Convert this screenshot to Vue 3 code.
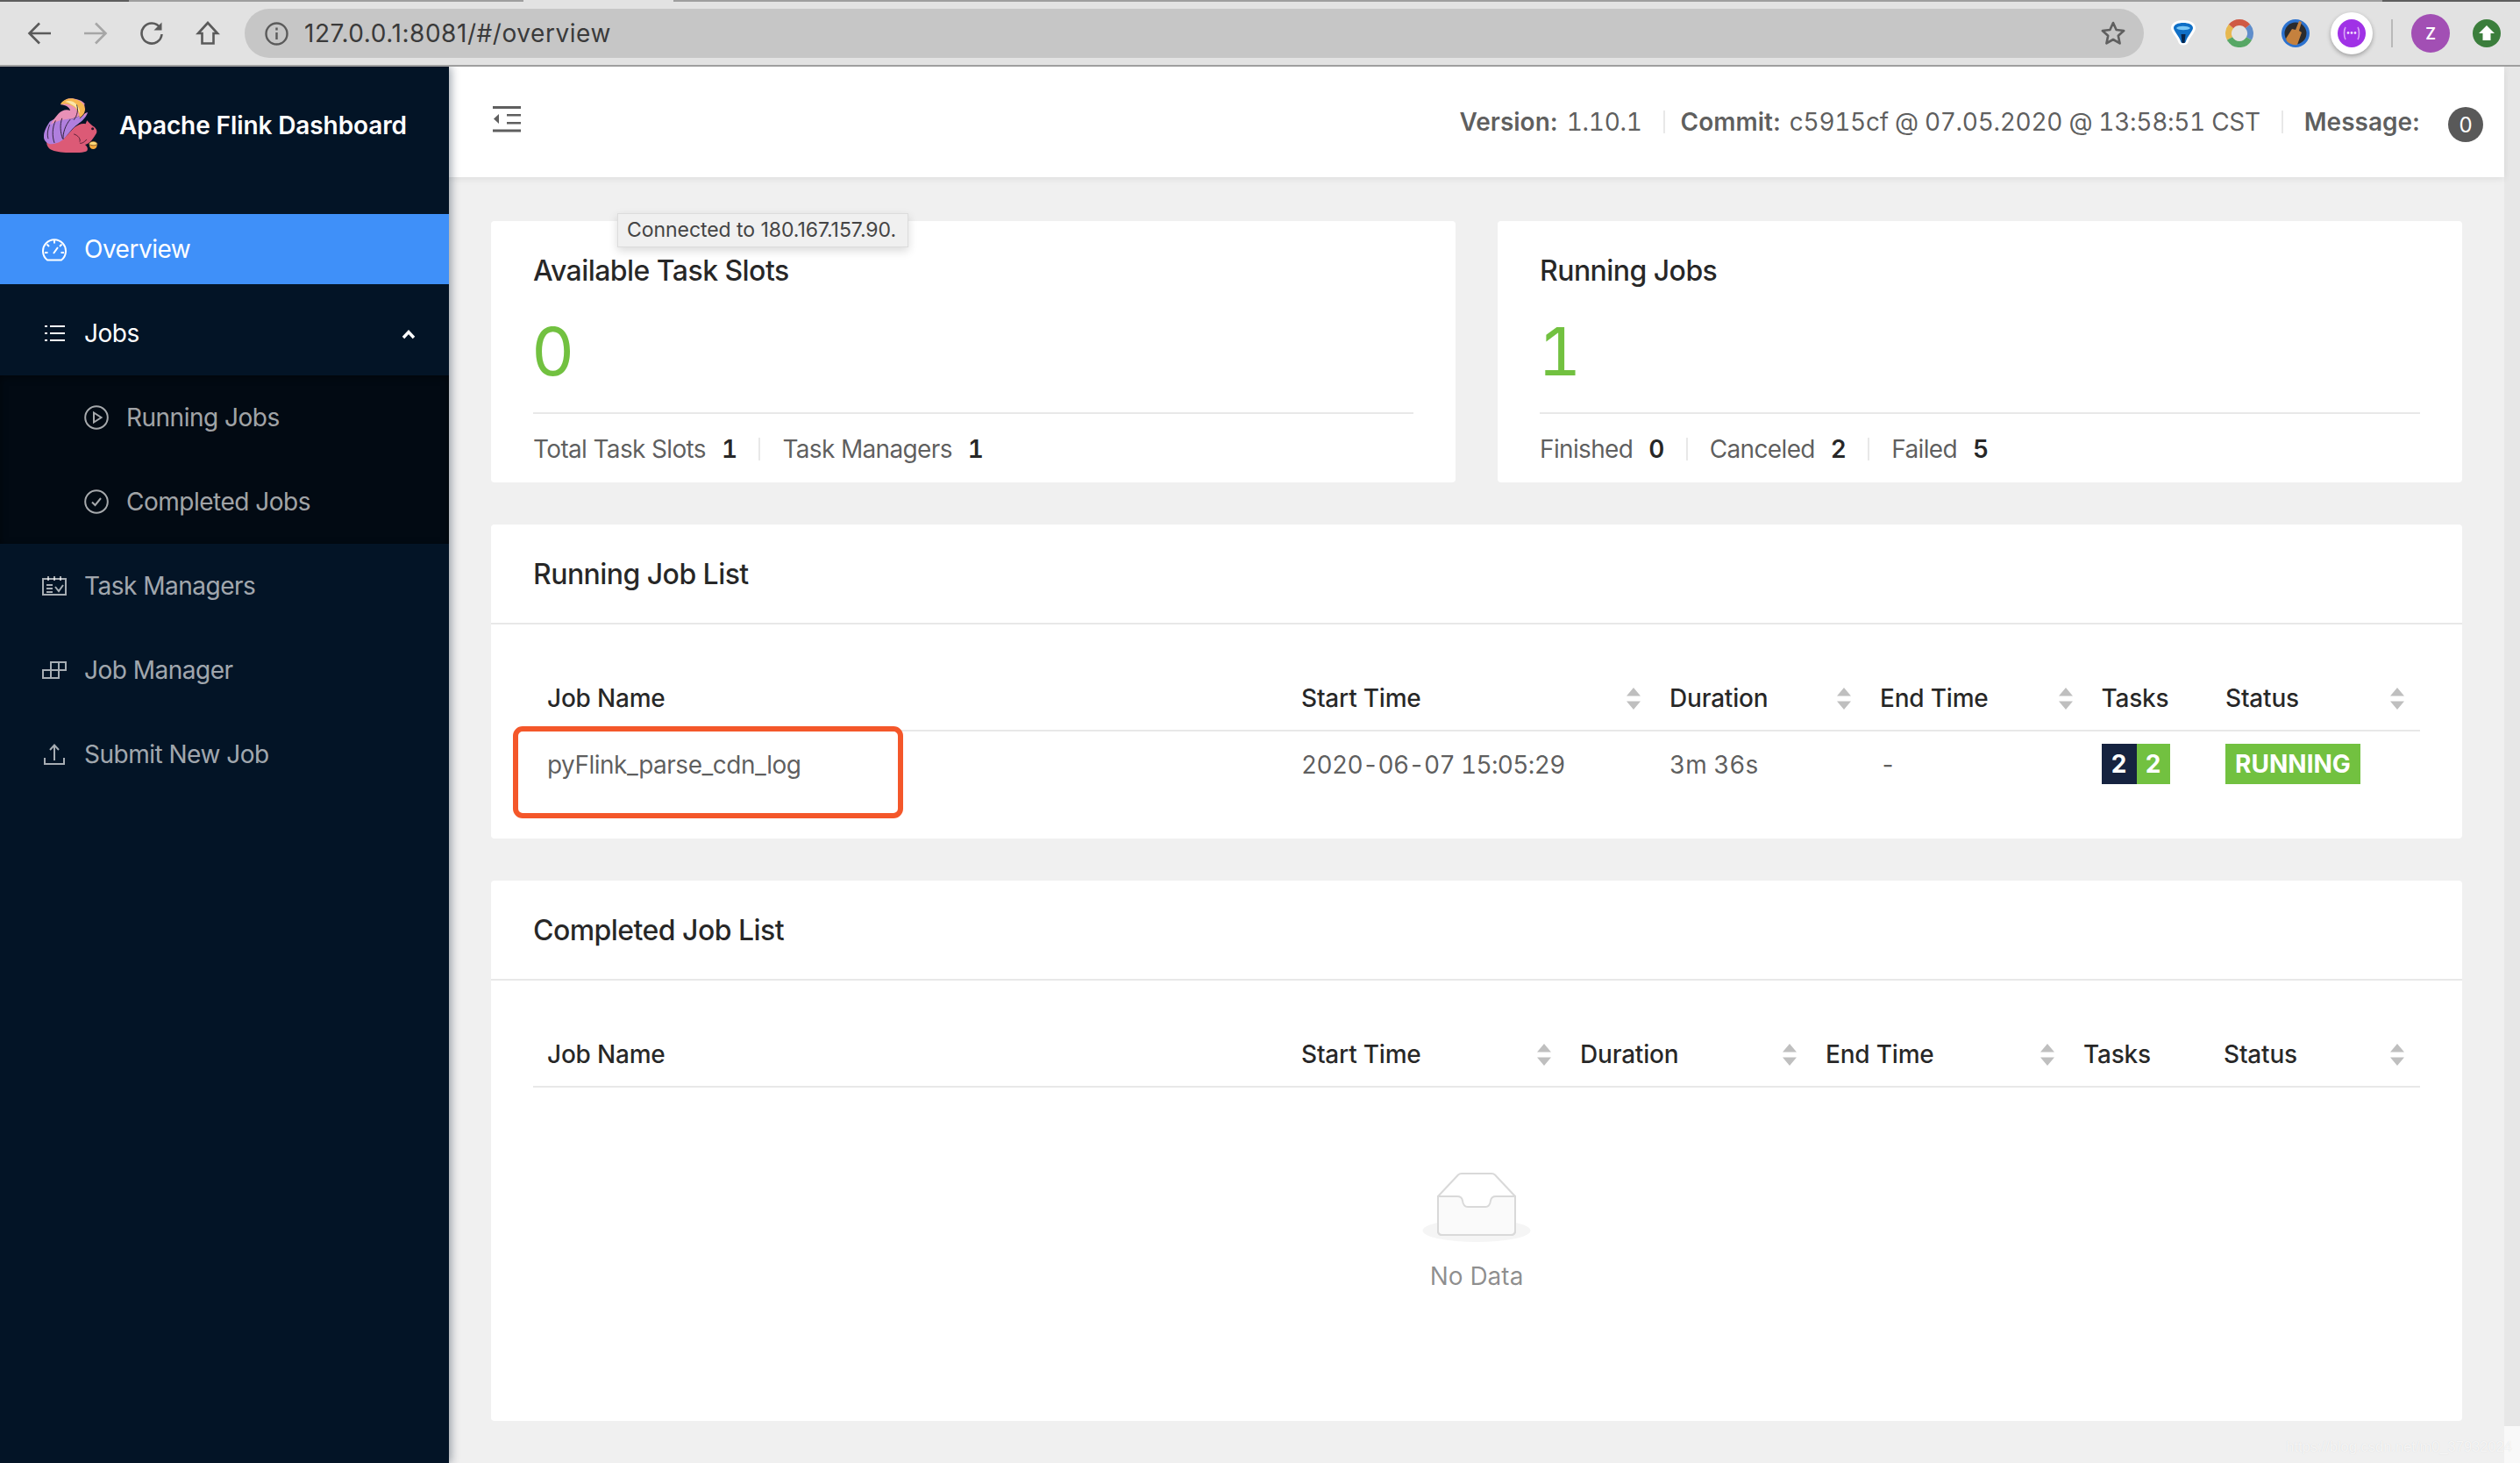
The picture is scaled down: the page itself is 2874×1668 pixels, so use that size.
<script setup>
const menuBottom = ['Task Managers', 'Job Manager', 'Submit New Job']
const runCols = [
  { t: 'Job Name', s: false },
  { t: 'Start Time', s: true },
  { t: 'Duration', s: true },
  { t: 'End Time', s: true },
  { t: 'Tasks', s: false },
  { t: 'Status', s: true }
]
</script>

<template>
  <div class="page">
    <header class="chrome">
      <div class="tabline">
        <span class="tl dark a"></span><span class="tl gray b"></span><span class="tl none c"></span><span class="tl gray d"></span><span class="tl dark e"></span>
      </div>
      <div class="toolbar">
        <svg class="nav" viewBox="0 0 28 28" fill="none" stroke="#5a5a5a" stroke-width="2.6"><path d="M27 14H3M14 2.5 2.5 14 14 25.5"/></svg>
        <svg class="nav" viewBox="0 0 28 28" fill="none" stroke="#a6a6a6" stroke-width="2.6"><path d="M1 14h24M14 2.5 25.5 14 14 25.5"/></svg>
        <svg class="nav" viewBox="0 0 28 28" fill="none" stroke="#5a5a5a" stroke-width="2.6"><path d="M23.5 7.5A11.5 11.5 0 1 0 25.5 15"/><path d="M25.5 1.5v9h-9" fill="#5a5a5a" stroke="none"/></svg>
        <svg class="nav" viewBox="0 0 28 28" fill="none" stroke="#5a5a5a" stroke-width="2.6"><path d="M14 2 3 14h4.500v11.500h13V14H25Z"/></svg>
        <div class="omni">
          <svg class="info" viewBox="0 0 27 27" fill="none" stroke="#5a5a5a" stroke-width="2.4"><circle cx="13.5" cy="13.5" r="12"/><path d="M13.500 12v8M13.500 6.500v3"/></svg>
          <span class="url">127.0.0.1:8081/#/overview</span>
          <svg class="star" viewBox="0 0 30 30" fill="none" stroke="#5f5f5f" stroke-width="2.6" stroke-linejoin="round"><path d="m15 3 3.600 8 8.600 1-6.400 5.800 1.800 8.600L15 22l-7.600 4.400 1.800-8.600L2.800 12l8.600-1Z"/></svg>
        </div>
        <svg class="ext e1" viewBox="0 0 30 32"><path d="M1 10C1 4 8 1 15 1s14 3 14 9c0 4-6 10-8 15-1 6-11 6-12 0C7 20 1 14 1 10Z" fill="#fff"/><path d="M4 10c0-4 5-6 11-6s11 2 11 6c0 3-6 9-8 15-.5 3-5.500 3-6 0C10 19 4 13 4 10Z" fill="#0f6fc6"/><path d="M7 10c2-3 13-3 16 0-2 3-14 3-16 0Z" fill="#7cc8f5"/><path d="M12.500 17h5l-1 10h-3Z" fill="#06244a"/></svg>
        <svg class="ext e2" viewBox="0 0 32 32" fill="none" stroke-width="7"><path d="M5 22A12.500 12.500 0 0 1 6.500 8" stroke="#e7b84f"/><path d="M6.500 8A12.500 12.500 0 0 1 25.500 8" stroke="#cf5a45"/><path d="M25.500 8A12.500 12.500 0 0 1 27 22" stroke="#5f8dcb"/><path d="M27 22A12.500 12.500 0 0 1 5 22" stroke="#57a765"/></svg>
        <svg class="ext e3" viewBox="0 0 32 32"><circle cx="16" cy="16" r="16" fill="#2c72cf"/><circle cx="16" cy="16" r="12.500" fill="#2b2b2d"/><path d="m20 2 3 1-3 10 3 2-5 14c-4 1-9-1-12-4l-1-3 7-11 4 1Z" fill="#c5813e"/></svg>
        <div class="ext-pill">
          <svg class="e4" viewBox="0 0 32 32"><circle cx="16" cy="16" r="16" fill="#a032e6"/><path d="M9 9c-2 3-2 11 0 14M23 9c2 3 2 11 0 14" fill="none" stroke="#d9a6f5" stroke-width="1.600"/><circle cx="12" cy="15.500" r="1.400" fill="#f1dcfc"/><circle cx="16" cy="15.500" r="1.400" fill="#f1dcfc"/><circle cx="20" cy="15.500" r="1.400" fill="#f1dcfc"/></svg>
        </div>
        <span class="tool-sep"></span>
        <span class="avatar">Z</span>
        <svg class="ext e5" viewBox="0 0 32 32"><circle cx="16" cy="16" r="16" fill="#3b7e3c"/><path d="M16 7 25 16H20.500V24H11.500V16H7Z" fill="#fff"/></svg>
      </div>
    </header>

    <div class="main">
      <aside class="sider">
        <div class="brand">
          <svg class="logo" viewBox="150 100 185 185">
            <path d="M170 272C190 288 282 290 297 279 302 270 296 262 290 258 310 252 318 236 327 222 333 214 330 205 322 198 314 192 306 186 297 175L292 187C278 184 266 190 256 198 244 208 232 226 214 240 200 246 185 246 165 236 155 250 160 262 170 272Z" fill="#dc5a76"/>
            <path d="M170 180C160 195 148 215 150 235 152 246 162 256 176 256 196 254 206 248 216 240 232 224 244 206 258 194 275 182 292 170 300 148 282 158 262 164 247 170 230 170 200 160 170 180Z" fill="#b07fde"/>
            <path d="M200 152C190 165 180 175 172 190 190 178 220 170 246 170 262 164 282 158 298 148L286 165 290 120C280 105 250 98 230 102 215 108 210 118 207 122 225 124 236 130 240 142 225 136 210 142 200 152Z" fill="#e891b7"/>
            <path d="M207 121C212 108 232 98 252 102 272 106 288 118 290 135 292 150 284 160 272 168 272 150 262 132 245 125 232 118 220 118 207 121Z" fill="#f6b74f"/>
            <path d="M222 112C236 106 252 110 262 122 270 132 273 142 273 152 266 135 250 120 222 112Z" fill="#fbe6a8"/>
            <path d="M170 190C164 205 160 222 165 238M190 176C178 200 178 230 186 252M212 168C204 190 206 215 214 238M240 172C222 192 214 222 216 240M288 120C296 140 292 152 272 168M262 122C268 140 264 158 252 174" fill="none" stroke="#1a1220" stroke-width="2.500"/>
            <path d="M252 222C266 226 276 238 272 248M296 240C288 250 276 256 272 252" fill="none" stroke="#41162a" stroke-width="2.500"/>
            <circle cx="316" cy="204" r="4.500" fill="#25172a"/>
            <circle cx="318" cy="260" r="13" fill="#f5a93b"/>
            <path d="M303 256C308 244 328 244 333 256 324 262 312 262 303 256Z" fill="#ffd977" stroke="#5c3418" stroke-width="2"/>
          </svg>
          <span class="brand-name">Apache Flink Dashboard</span>
        </div>

        <nav class="menu">
          <div class="item active">
            <svg class="ic" viewBox="0 0 28 28" fill="none" stroke="currentColor" stroke-width="2"><path d="M6 26.500A13 13 0 1 1 22 26.500Z"/><path d="M14 4v3.500M5.500 8.500 8 11M22.500 8.500 20 11M3 18h3.500M25 18h-3.500M13 19l5-7" /></svg>
            <span>Overview</span>
          </div>
          <div class="item open">
            <svg class="ic" viewBox="0 0 28 28" fill="none" stroke="currentColor" stroke-width="2"><path d="M9 6h17M9 14h17M9 22h17M3 6h3M3 14h3M3 22h3"/></svg>
            <span>Jobs</span>
            <svg class="chev" viewBox="0 0 16 12" fill="none" stroke="currentColor" stroke-width="3.400"><path d="M2 10 8 3.500 14 10"/></svg>
          </div>
          <div class="sub">
            <div class="item subitem">
              <svg class="ic" viewBox="0 0 28 28" fill="none" stroke="currentColor" stroke-width="2"><circle cx="14" cy="14" r="12.800"/><path d="M11 8.500 19.500 14 11 19.500Z"/></svg>
              <span>Running Jobs</span>
            </div>
            <div class="item subitem">
              <svg class="ic" viewBox="0 0 28 28" fill="none" stroke="currentColor" stroke-width="2"><circle cx="14" cy="14" r="12.800"/><path d="m9 14.500 3.500 3.500 6.500-8"/></svg>
              <span>Completed Jobs</span>
            </div>
          </div>
          <div class="item">
            <svg class="ic" viewBox="0 0 28 28" fill="none" stroke="currentColor" stroke-width="2"><path d="M1 6h26v18H1Z"/><path d="M7 3v5M14 3v5M21 3v5M5 13h7M5 17h7M5 21h7M15 15l4 5 5-7"/></svg>
            <span>{{ menuBottom[0] }}</span>
          </div>
          <div class="item">
            <svg class="ic" viewBox="0 0 28 28" fill="none" stroke="currentColor" stroke-width="2"><path d="M10 14V5h17v9H1v9h18v-9M19 5v9M10 14v9"/></svg>
            <span>{{ menuBottom[1] }}</span>
          </div>
          <div class="item">
            <svg class="ic" viewBox="0 0 28 28" fill="none" stroke="currentColor" stroke-width="2"><path d="M3 18v7h22v-7M14 5v16M9 9l5-5.500L19 9"/></svg>
            <span>{{ menuBottom[2] }}</span>
          </div>
        </nav>
      </aside>

      <section class="workspace">
        <div class="topbar">
          <svg class="fold" viewBox="0 0 32 30" fill="#5f5f5f"><path d="M0 0h32v3H0ZM16 9h16v2.500H16ZM16 18h16v2.500H16ZM0 26.500h32V29.500H0ZM1 14.500 7 9V20Z"/></svg>
          <div class="meta">
            <b>Version:</b><span class="v1">1.10.1</span>
            <i class="vsep s1"></i>
            <b>Commit:</b><span class="v2">c5915cf @ 07.05.2020 @ 13:58:51 CST</span>
            <i class="vsep s2"></i>
            <b>Message:</b>
            <span class="count">0</span>
          </div>
        </div>

        <div class="content">
          <div class="stats">
            <div class="card stat">
              <h3 class="stat-title">Available Task Slots</h3>
              <div class="big">0</div>
              <div class="stat-foot">
                <span>Total Task Slots</span><b>1</b><i class="fsep"></i><span>Task Managers</span><b>1</b>
              </div>
            </div>
            <div class="card stat">
              <h3 class="stat-title">Running Jobs</h3>
              <div class="big">1</div>
              <div class="stat-foot">
                <span>Finished</span><b>0</b><i class="fsep"></i><span>Canceled</span><b>2</b><i class="fsep"></i><span>Failed</span><b>5</b>
              </div>
            </div>
          </div>

          <div class="card list">
            <h3 class="list-title">Running Job List</h3>
            <div class="list-body">
              <div class="row head run-cols">
                <div v-for="c in runCols" :key="c.t" class="th">
                  <span>{{ c.t }}</span>
                  <svg v-if="c.s" class="sort" viewBox="0 0 16 25" fill="#bfbfbf"><path d="M8 0 16 9.500H0ZM0 15.500H16L8 25Z"/></svg>
                </div>
              </div>
              <div class="row body run-cols">
                <div class="td txt name">
                  pyFlink_parse_cdn_log
                  <span class="mark"></span>
                </div>
                <div class="td txt stamp">2020-06-07 15:05:29</div>
                <div class="td txt">3m 36s</div>
                <div class="td txt">-</div>
                <div class="td"><span class="tasks"><b class="t1">2</b><b class="t2">2</b></span></div>
                <div class="td"><span class="state">RUNNING</span></div>
              </div>
            </div>
          </div>

          <div class="card list done">
            <h3 class="list-title">Completed Job List</h3>
            <div class="list-body">
              <div class="row head done-cols">
                <div v-for="c in runCols" :key="c.t" class="th">
                  <span>{{ c.t }}</span>
                  <svg v-if="c.s" class="sort" viewBox="0 0 16 25" fill="#bfbfbf"><path d="M8 0 16 9.500H0ZM0 15.500H16L8 25Z"/></svg>
                </div>
              </div>
              <div class="empty">
                <svg class="empty-ic" viewBox="0 0 124 80" fill="none">
                  <ellipse cx="62" cy="66" rx="61.500" ry="13" fill="#f5f5f5"/>
                  <path d="M18 27 41 2.500C42 1.500 43 1 45 1H79C81 1 82 1.500 83 2.500L106 27V66C106 69 104 71 101 71H23C20 71 18 69 18 66Z" fill="#fff" stroke="#d9d9d9" stroke-width="2"/>
                  <path d="M18 27H40C44 27 45.500 29 46 32 46.500 36 48 39 52 39H72C76 39 77.500 36 78 32 78.500 29 80 27 84 27H106V66C106 69 104 71 101 71H23C20 71 18 69 18 66Z" fill="#fafafa" stroke="#d9d9d9" stroke-width="2"/>
                </svg>
                <p>No Data</p>
              </div>
            </div>
          </div>
          <span class="tooltip">Connected to 180.167.157.90.</span>
          <span class="watermark">https://blog.csdn.net/m0_37932024</span>
        </div>
      </section>

      <div class="scrollbar"><span class="track"></span><span class="rest"></span></div>
    </div>
  </div>
</template>

<style scoped>
.page {
  width: 2874px;
  height: 1668px;
  overflow: hidden;
  display: flex;
  flex-direction: column;
  font-family: Inter, "Liberation Sans", sans-serif;
  font-size: 28px;
  color: rgba(0, 0, 0, 0.65);
  background: #f0f0f0;
}
/* browser chrome */
.chrome {
  height: 76px;
  flex: none;
  background: #e2e2e2;
  border-bottom: 2px solid #9e9e9e;
  box-sizing: border-box;
  position: relative;
  z-index: 5;
}
.tabline { display: flex; height: 2px; }
.tl.dark { background: #5e5e5e; }
.tl.gray { background: #9e9e9e; }
.tl.a { width: 147px; }
.tl.b { width: 450px; }
.tl.c { width: 171px; }
.tl.d { width: 1949px; }
.tl.e { flex: 1; }
.toolbar {
  height: 72px;
  display: flex;
  align-items: center;
  padding-left: 31px;
}
.nav { width: 28px; height: 28px; margin-right: 36px; flex: none; margin-top: -1px; }
.nav:nth-child(4) { margin-right: 28px; }
.omni {
  width: 2166px;
  height: 56px;
  border-radius: 28px;
  background: #c6c6c6;
  display: flex;
  align-items: center;
  padding: 0 20px 0 23px;
  box-sizing: border-box;
  flex: none;
}
.info { width: 27px; height: 27px; flex: none; }
.url {
  margin-left: 18px;
  flex: 1;
  color: #3a3a3a;
  font-size: 28px;
  letter-spacing: 0.55px;
}
.star { width: 30px; height: 30px; flex: none; }
.ext { flex: none; }
.e1 { width: 30px; height: 32px; margin-left: 30px; }
.e2 { width: 32px; height: 32px; margin-left: 33px; }
.e3 { width: 32px; height: 32px; margin-left: 32px; }
.ext-pill {
  width: 48px;
  height: 48px;
  margin-left: 24px;
  border-radius: 50%;
  background: #fff;
  box-shadow: 0 2px 5px rgba(0, 0, 0, 0.3);
  display: flex;
  align-items: center;
  justify-content: center;
  flex: none;
}
.e4 { width: 32px; height: 32px; }
.tool-sep { width: 2px; height: 32px; margin-left: 21px; background: #b9b9b9; flex: none; }
.avatar {
  width: 44px;
  height: 44px;
  margin-left: 21px;
  border-radius: 50%;
  background: #a24fb4;
  color: #fff;
  font-size: 18px;
  font-weight: 600;
  display: flex;
  align-items: center;
  justify-content: center;
  flex: none;
}
.e5 { width: 32px; height: 32px; margin-left: 26px; }

.main { flex: 1; display: flex; min-height: 0; }

/* sidebar */
.sider {
  width: 512px;
  flex: none;
  background: #031426;
  box-shadow: 2px 0 10px rgba(0, 21, 41, 0.4);
  position: relative;
  z-index: 3;
  color: rgba(255, 255, 255, 0.65);
}
.brand {
  height: 168px;
  display: flex;
  align-items: center;
  padding-left: 50px;
  box-sizing: border-box;
  padding-bottom: 34px;
}
.logo { width: 62px; height: 62px; flex: none; }
.brand-name {
  margin-left: 24px;
  color: #fff;
  font-weight: 600;
  font-size: 28px;
  white-space: nowrap;
  letter-spacing: -0.1px;
}
.menu { display: flex; flex-direction: column; letter-spacing: -0.5px; }
.item {
  height: 80px;
  margin-bottom: 16px;
  display: flex;
  align-items: center;
  padding-left: 48px;
  position: relative;
  flex: none;
}
.item .ic { width: 28px; height: 28px; flex: none; margin-right: 20px; }
.item.active { background: #3f90f9; color: #fff; }
.item.open { color: #fff; margin-bottom: 8px; }
.chev { width: 16px; height: 12px; position: absolute; right: 38px; top: 35px; }
.sub {
  background: #020a13;
  box-shadow: inset 0 2px 8px rgba(0, 0, 0, 0.45);
  padding: 8px 0;
  margin-bottom: 8px;
  display: flex;
  flex-direction: column;
  gap: 16px;
}
.subitem { padding-left: 96px; margin-bottom: 0; }
.subitem .ic { margin-right: 20px; }

/* main area */
.workspace { flex: 1; min-width: 0; display: flex; flex-direction: column; }
.topbar {
  height: 126px;
  flex: none;
  background: #fff;
  box-shadow: 0 2px 8px rgba(0, 0, 0, 0.08);
  position: relative;
  z-index: 2;
  display: flex;
  align-items: center;
  justify-content: space-between;
  padding: 0 24px 0 50px;
  box-sizing: border-box;
}
.fold { width: 32px; height: 30px; margin-top: -6px; }
.meta {
  display: flex;
  align-items: center;
  white-space: nowrap;
}
.meta b { font-weight: 600; }
.v1 { margin-left: 10px; font-variant-numeric: tabular-nums; letter-spacing: -0.3px; }
.v2 { margin-left: 10px; font-variant-numeric: tabular-nums; letter-spacing: -0.3px; }
.vsep { display: block; width: 2px; height: 26px; background: #e8e8e8; }
.s1 { margin: 0 18px 0 24px; }
.s2 { margin: 0 24px 0 24px; }
.count {
  width: 40px;
  height: 40px;
  margin-left: 32px;
  margin-top: 6px;
  border-radius: 50%;
  background: #595959;
  color: #fff;
  display: flex;
  align-items: center;
  justify-content: center;
  font-size: 24px;
}
.content {
  flex: 1;
  position: relative;
  padding: 50px 48px 0;
  display: flex;
  flex-direction: column;
  gap: 48px;
  min-height: 0;
}
.card { background: #fff; border-radius: 4px; }
.stats { display: grid; grid-template-columns: 1100px 1100px; gap: 48px; }
.stat { height: 298px; padding: 0 48px; box-sizing: border-box; }
.stat-title {
  margin: 0;
  height: 114px;
  line-height: 114px;
  font-size: 32px;
  font-weight: 500;
  letter-spacing: -0.55px;
  color: rgba(0, 0, 0, 0.85);
}
.big {
  height: 70px;
  line-height: 68px;
  margin-bottom: 34px;
  font-size: 76px;
  color: #72c140;
  font-variant-numeric: tabular-nums;
  margin-left: -2px;
}
.stat-foot {
  height: 78px;
  box-sizing: border-box;
  border-top: 2px solid #e8e8e8;
  padding-top: 3px;
  display: flex;
  align-items: center;
  letter-spacing: -0.65px;
}
.stat-foot b {
  margin-left: 18px;
  font-weight: 600;
  color: rgba(0, 0, 0, 0.85);
  font-variant-numeric: tabular-nums;
}
.fsep { display: block; width: 2px; height: 26px; margin: 0 25px; background: #e8e8e8; }
.list { flex: none; }
.list-title {
  margin: 0;
  height: 114px;
  line-height: 114px;
  padding-left: 48px;
  box-sizing: border-box;
  border-bottom: 2px solid #e8e8e8;
  font-size: 32px;
  font-weight: 500;
  letter-spacing: -0.55px;
  color: rgba(0, 0, 0, 0.85);
}
.list-body { padding: 48px 48px 48px; }
.run-cols { grid-template-columns: 860px 420px 240px 252.500px 141.500px 237px; }
.done-cols { grid-template-columns: 860px 318px 280px 294px 160px 239px; }
.row { display: grid; }
.row.head { height: 74px; border-bottom: 2px solid #e8e8e8; box-sizing: border-box; }
.th {
  display: flex;
  align-items: center;
  justify-content: space-between;
  padding: 0 17px 0 16px;
  font-weight: 500;
  letter-spacing: -0.2px;
  color: rgba(0, 0, 0, 0.85);
}
.sort { width: 16px; height: 25px; flex: none; }
.row.body { height: 74px; font-variant-numeric: tabular-nums; }
.td { display: flex; align-items: center; padding-left: 16px; position: relative; }
.td.txt { padding-top: 2px; box-sizing: border-box; }
.td.name { overflow: visible; letter-spacing: -0.5px; }
.td.stamp { letter-spacing: -0.65px; }
.mark {
  position: absolute;
  left: -23px;
  top: -6px;
  width: 445px;
  height: 105px;
  box-sizing: border-box;
  border: 6px solid #f4572a;
  border-radius: 11px;
}
.tasks { display: flex; height: 46px; }
.tasks b { display: flex; align-items: center; justify-content: center; color: #fff; font-weight: 700; }
.t1 { width: 40px; background: #162340; }
.t2 { width: 38px; background: #72c140; }
.state {
  width: 154px;
  height: 46px;
  display: flex;
  align-items: center;
  justify-content: center;
  background: #72c140;
  color: #fff;
  font-weight: 700;
}
.done { height: 616px; }
.empty { display: flex; flex-direction: column; align-items: center; padding-top: 97px; }
.empty-ic { width: 124px; height: 80px; }
.empty p {
  margin: 18px 0 0;
  line-height: 40px;
  color: rgba(0, 0, 0, 0.45);
}
.tooltip {
  position: absolute;
  left: 192px;
  top: 41px;
  width: 332px;
  height: 39px;
  box-sizing: border-box;
  background: #f0f0f0;
  border: 1px solid #dcdcdc;
  box-shadow: 0 4px 10px rgba(0, 0, 0, 0.15);
  color: #444;
  font-size: 23px;
  line-height: 37px;
  letter-spacing: -0.05px;
  padding-right: 3px;
  text-align: center;
  white-space: nowrap;
}
.watermark {
  position: absolute;
  right: -9px;
  top: 1435px;
  font-family: "Liberation Sans", sans-serif;
  font-size: 16.500px;
  line-height: 24px;
  color: rgba(255, 255, 255, 0.75);
  text-shadow: 0 0 1px rgba(0, 0, 0, 0.12);
  white-space: nowrap;
  z-index: 4;
}
.scrollbar { width: 18px; flex: none; display: flex; flex-direction: column; }
.track { height: 1550px; background: #e7e7e7; flex: none; }
.rest { flex: 1; background: #f9f9f9; }
</style>

<style>
html, body { margin: 0; padding: 0; background: #f0f0f0; }
</style>
